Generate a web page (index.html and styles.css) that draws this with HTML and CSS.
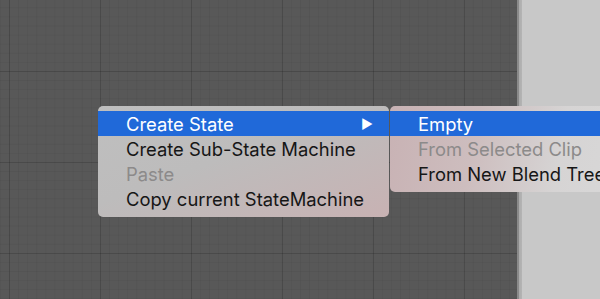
FILE: index.html
```html
<!DOCTYPE html>
<html>
<head>
<meta charset="utf-8">
<link rel="stylesheet" href="styles.css">
</head>
<body>
<div class="window">
  <div class="canvas">
    <div class="menu main-menu">
      <div class="item active"><span>Create State</span><span class="arrow">&#9654;</span></div>
      <div class="item"><span>Create Sub-State Machine</span></div>
      <div class="item disabled"><span>Paste</span></div>
      <div class="item"><span>Copy current StateMachine</span></div>
    </div>
    <div class="menu sub-menu">
      <div class="item active"><span>Empty</span></div>
      <div class="item disabled"><span>From Selected Clip</span></div>
      <div class="item"><span>From New Blend Tree</span></div>
    </div>
  </div>
  <div class="divider"></div>
  <div class="panel"></div>
</div>
</body>
</html>
```

FILE: styles.css
```css
html, body {
  margin: 0;
  padding: 0;
  width: 600px;
  height: 299px;
  overflow: hidden;
  font-family: "Inter", "Liberation Sans", sans-serif;
}

.window {
  display: flex;
  width: 600px;
  height: 299px;
}

.canvas {
  position: relative;
  z-index: 2;
  flex: 1;
  background-color: #585858;
  background-image:
    linear-gradient(to right, rgba(0,0,0,0.13) 1px, transparent 1px),
    linear-gradient(to bottom, rgba(0,0,0,0.13) 1px, transparent 1px),
    linear-gradient(to right, rgba(0,0,0,0.045) 1px, transparent 1px),
    linear-gradient(to bottom, rgba(0,0,0,0.045) 1px, transparent 1px);
  background-size: 91px 91px, 91px 91px, 9.1px 9.1px, 9.1px 9.1px;
  background-position: 9px 71px, 9px 71px, 9px 71px, 9px 71px;
}

.divider {
  width: 5px;
  background: linear-gradient(to right, #8a8a8a 0, #8a8a8a 2px, #acacac 2px, #b4b4b4 5px);
}

.panel {
  width: 78px;
  background: #c8c8c8;
}

.menu {
  position: absolute;
  top: 106px;
  border-radius: 5px;
  padding: 5px 0 6px;
  box-sizing: border-box;
}

.main-menu {
  left: 98px;
  width: 291px;
  background: linear-gradient(160deg, #bfbfbf 0%, #bdbcbc 45%, #c8b2b3 100%);
}

.sub-menu {
  left: 390px;
  width: 240px;
  padding-bottom: 6px;
  border-radius: 5px 0 0 5px;
  background: linear-gradient(100deg, #c8b2b4 0%, #cdbdbe 35%, #d6d4d4 70%, #d8d8d8 100%);
}

.item {
  display: flex;
  align-items: center;
  justify-content: space-between;
  height: 25px;
  padding: 0 16px 0 28px;
  font-size: 18.4px;
  color: #161616;
  white-space: nowrap;
}

.item.active {
  background: #2069d9;
  color: #ffffff;
}

.item.disabled {
  color: #8c8a8a;
}

.arrow {
  font-size: 13px;
  color: #ffffff;
}
```
